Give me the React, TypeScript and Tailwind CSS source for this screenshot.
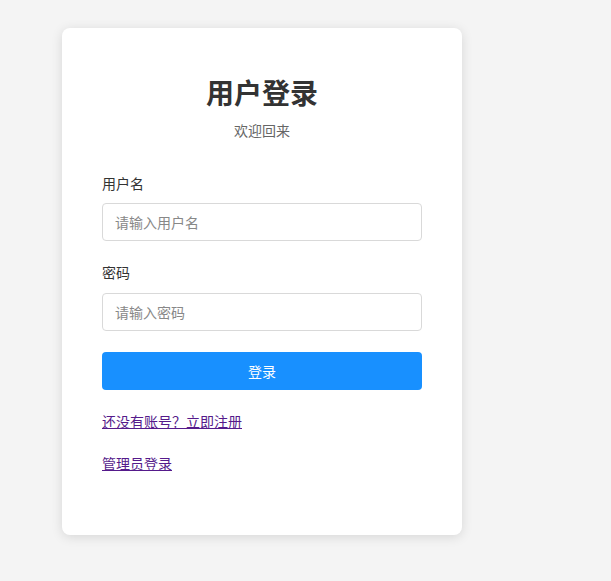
import React, { useState } from 'react';

export default function App() {
  const [username, setUsername] = useState('');
  const [password, setPassword] = useState('');

  return (
    <div
      className="min-h-[581px] bg-[#f4f4f4] pl-[62px] pt-[28px] pb-[46px]"
      style={{ fontFamily: '"Noto Sans CJK SC", "Noto Sans", sans-serif' }}
    >
      <div className="w-[400px] rounded-lg bg-white px-10 pt-10 pb-[40px] shadow-[0_2px_12px_rgba(0,0,0,0.12)]">
        <h2 className="text-center text-[28px] font-bold leading-[48px] text-[#333]">用户登录</h2>
        <p className="mt-[3px] text-center text-sm leading-[22px] text-[#666]">欢迎回来</p>

        <form onSubmit={(e) => e.preventDefault()} className="mt-[32px]">
          <div className="mb-[21px]">
            <label className="mb-[10px] block text-sm leading-[20px] text-[#333]">用户名</label>
            <input
              type="text"
              value={username}
              onChange={(e) => setUsername(e.target.value)}
              placeholder="请输入用户名"
              className="h-[38px] w-full rounded border border-[#d9d9d9] px-3 text-sm text-[#333] outline-none placeholder:text-[#888]"
            />
          </div>

          <div className="mb-[21px]">
            <label className="mb-[11px] block text-sm leading-[20px] text-[#333]">密码</label>
            <input
              type="password"
              value={password}
              onChange={(e) => setPassword(e.target.value)}
              placeholder="请输入密码"
              className="h-[38px] w-full rounded border border-[#d9d9d9] px-3 text-sm text-[#333] outline-none placeholder:text-[#888]"
            />
          </div>

          <button
            type="submit"
            className="h-[38px] w-full rounded bg-[#1890ff] text-sm text-white"
          >
            登录
          </button>
        </form>

        <p className="mt-[21px] text-sm leading-[20px]">
          <a href="#" className="text-[#551a8b] underline">还没有账号？立即注册</a>
        </p>
        <p className="mt-[22px] mb-[22px] text-sm leading-[20px]">
          <a href="#" className="text-[#551a8b] underline">管理员登录</a>
        </p>
      </div>
    </div>
  );
}
